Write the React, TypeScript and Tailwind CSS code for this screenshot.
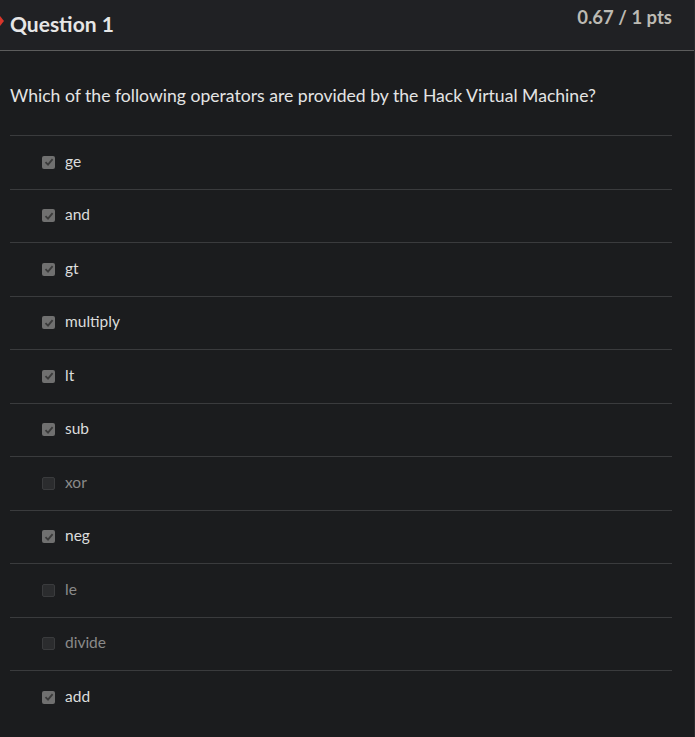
import React from 'react';

const options: { label: string; checked: boolean }[] = [
  { label: 'ge', checked: true },
  { label: 'and', checked: true },
  { label: 'gt', checked: true },
  { label: 'multiply', checked: true },
  { label: 'lt', checked: true },
  { label: 'sub', checked: true },
  { label: 'xor', checked: false },
  { label: 'neg', checked: true },
  { label: 'le', checked: false },
  { label: 'divide', checked: false },
  { label: 'add', checked: true },
];

function Box({ checked }: { checked: boolean }) {
  if (!checked) {
    return <span className="block w-[13px] h-[13px] rounded-[2px] bg-[#2b2c2e] border border-[#3a3b3d]" />;
  }
  return (
    <span className="flex items-center justify-center w-[13px] h-[13px] rounded-[2px] bg-[#707070]">
      <svg width="10" height="10" viewBox="0 0 10 10">
        <path d="M1.5 5.2 L4 7.6 L8.6 2.2" fill="none" stroke="#3a3a3a" strokeWidth="1.8" />
      </svg>
    </span>
  );
}

export default function App() {
  return (
    <div className="w-[695px] h-[737px] overflow-hidden bg-[#1b1c1e] font-['Lato','Open_Sans',sans-serif] border-r border-[#2a2b2d]">
      {/* header */}
      <div className="relative h-[51px] bg-[#202124] border-b border-[#5c5c5c] flex justify-between pl-[10px] pr-[22px]">
        <span className="absolute left-0 top-[16px] w-0 h-0 border-y-[5px] border-y-transparent border-l-[4px] border-l-[#d9362b]" />
        <h2 className="text-[21px] font-bold text-[#e6e6e6] leading-none pt-[13px]">Question 1</h2>
        <span className="text-[18.5px] font-bold text-[#bcbab3] leading-none pt-[8px]">0.67 / 1 pts</span>
      </div>

      <div className="px-[10px] pr-[22px]">
        <p className="text-[17.6px] text-[#e4e4e4] pt-[35px] pb-[29px] leading-[20px]">
          Which of the following operators are provided by the Hack Virtual Machine?
        </p>
        {options.map((o) => (
          <div key={o.label} className="border-t border-[#3a3b3d] h-[53.5px] flex items-center gap-[10px] pl-[32px]">
            <Box checked={o.checked} />
            <span className={`text-[15.5px] leading-none pb-[2px] ${o.checked ? 'text-[#dcdcdc]' : 'text-[#8a8a8a]'}`}>{o.label}</span>
          </div>
        ))}
      </div>
    </div>
  );
}
